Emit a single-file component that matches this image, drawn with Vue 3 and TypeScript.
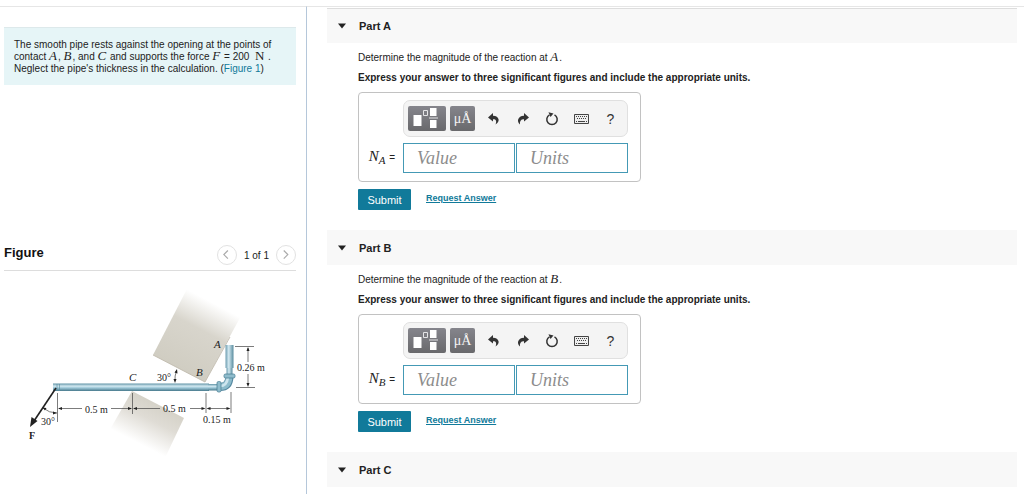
<script setup lang="ts">
import { reactive } from 'vue'

interface Part {
  id: string
  open: boolean
  value: string
  units: string
}

const parts = reactive<Part[]>([
  { id: 'A', open: true, value: '', units: '' },
  { id: 'B', open: true, value: '', units: '' },
  { id: 'C', open: false, value: '', units: '' },
])
</script>

<template>
  <div class="page">
    <aside class="side">
      <p class="problem">
        The smooth pipe rests against the opening at the points of contact <i class="math">A</i>,
        <i class="math">B</i>, and <i class="math">C</i> and supports the force
        <i class="math">F</i> = 200 &nbsp;<span class="math">N</span> . Neglect the pipe's thickness in the
        calculation. (<a href="#figure">Figure 1</a>)
      </p>
      <section id="figure" class="figure">
        <header class="figure-head">
          <h2>Figure</h2>
          <nav class="pager">
            <button type="button" aria-label="Previous figure">
              <svg viewBox="0 0 20 20"><path d="M11 5 6.500 9.500l4.500 4.500" /></svg>
            </button>
            <span>1 of 1</span>
            <button type="button" aria-label="Next figure">
              <svg viewBox="0 0 20 20"><path d="M7.500 5 12 9.500 7.500 14" /></svg>
            </button>
          </nav>
        </header>
        <svg class="diagram" viewBox="4 271 292 194" role="img" aria-label="Pipe resting at points A, B and C">
          <defs>
            <linearGradient id="upper" gradientUnits="userSpaceOnUse" x1="179" y1="368" x2="213" y2="303">
              <stop offset="0" stop-color="#d0cdc2" />
              <stop offset="0.600" stop-color="#d8d5cc" />
              <stop offset="1" stop-color="#ffffff" />
            </linearGradient>
            <linearGradient id="lower" gradientUnits="userSpaceOnUse" x1="158" y1="404" x2="138" y2="443">
              <stop offset="0" stop-color="#d5d2c8" />
              <stop offset="0.400" stop-color="#dfdcd5" />
              <stop offset="1" stop-color="#ffffff" />
            </linearGradient>
            <linearGradient id="pipe" x1="0" y1="0" x2="0" y2="1">
              <stop offset="0" stop-color="#5f93a6" />
              <stop offset="0.350" stop-color="#d3e9f1" />
              <stop offset="0.550" stop-color="#a5cddc" />
              <stop offset="1" stop-color="#47798c" />
            </linearGradient>
            <linearGradient id="riser" x1="0" y1="0" x2="1" y2="0">
              <stop offset="0" stop-color="#6b9caf" />
              <stop offset="0.400" stop-color="#d3e9f1" />
              <stop offset="1" stop-color="#588b9e" />
            </linearGradient>
          </defs>
          <path d="M153 355 205 382 241 316 188 287z" fill="url(#upper)" />
          <path d="M153 355 205 382 230 337" fill="none" stroke="#bdb6a8" stroke-width="0.800" />
          <path d="M132 391 184 418 164 460 108 433z" fill="url(#lower)" />
          <rect x="53" y="383.500" width="156" height="7.500" fill="url(#pipe)" />
          <path d="M57 384v7M59.500 384v7" stroke="#568a9e" stroke-width="0.600" />
          <rect x="208" y="384" width="10" height="6.500" fill="url(#pipe)" />
          <rect x="226.500" y="345" width="6" height="32" fill="url(#riser)" />
          <rect x="225.500" y="345" width="8" height="23" fill="url(#riser)" />
          <path d="M220 387q9 0 9.500-10" fill="none" stroke="#5588a0" stroke-width="8" />
          <path d="M220 386.700q8.500 0 9.200-10" fill="none" stroke="#8dbccc" stroke-width="6.500" />
          <path d="M220 386q7 0 8-9" fill="none" stroke="#cde5ee" stroke-width="2.500" />
          <rect x="217" y="381.500" width="4" height="10.500" rx="1.500" fill="#8fbccc" stroke="#4d8195" stroke-width="0.800" />
          <rect x="224" y="374" width="11" height="4" rx="1.500" fill="#8fbccc" stroke="#4d8195" stroke-width="0.800" />
          <g class="dims">
            <path d="M57.500 393v29M132.500 393v21M206 393v20M231 392v21M235 346.500h19M236 387.500h19M248 348v14M248 374v11" />
            <path d="M60 408.500h22M111 408.500h20M134 408.500h26M190 408.500h14M208 408.500h21" />
            <path d="M43 408q6 5 14 5M176.500 371q-2 5-1.500 10" />
          </g>
          <path
            class="tips"
            d="M58 408.500l4-1.500v3zM132 408.500l-4-1.500v3zM133 408.500l4-1.500v3zM205.500 408.500l-4-1.500v3zM206.500 408.500l4-1.500v3zM230.500 408.500l-4-1.500v3zM248 347l-1.500 4h3zM248 387l-1.500-4h3zM57 413l-4-1.500v3zM42.500 407.500l4 .5-1.500 2.500zM177 369l-2.500 3.500 3 1zM175 383l-1.500-4h3z"
          />
          <path d="M56 388 34 421" stroke="#222" stroke-width="1.600" />
          <path class="tips" d="M30 427l1.500-10 6 4z" />
          <g class="labels">
            <text x="129" y="381" class="it">C</text>
            <text x="214" y="348" class="it">A</text>
            <text x="196" y="376" class="it">B</text>
            <text x="157" y="381">30°</text>
            <text x="237" y="371">0.26 m</text>
            <text x="85" y="413">0.5 m</text>
            <text x="163" y="412">0.5 m</text>
            <text x="203" y="423">0.15 m</text>
            <text x="41" y="425">30°</text>
            <text x="29" y="439" class="bold">F</text>
          </g>
        </svg>
      </section>
    </aside>

    <main class="main">
      <section v-for="part in parts" :key="part.id" class="part">
        <h2 class="part-head">
          <button type="button" :aria-expanded="part.open" @click="part.open = !part.open">
            <svg viewBox="0 0 8 6"><path d="M0 .500h8L4 5.500z" /></svg>
            Part {{ part.id }}
          </button>
        </h2>
        <form v-if="part.open" class="part-body" @submit.prevent>
          <p>Determine the magnitude of the reaction at <i class="math">{{ part.id }}</i>.</p>
          <p class="strong">Express your answer to three significant figures and include the appropriate units.</p>
          <div class="answer">
            <div class="toolbar">
              <button type="button" class="dark wide" aria-label="Templates">
                <svg viewBox="0 0 38 25">
                  <path d="M5.500 9h8v11h-8zM22 2h6.500v8H22zM22 14h6.500v8H22z" fill="#fff" />
                  <path d="M21 12h9" stroke="#e4e4e6" stroke-width="1" />
                  <path d="M15.500 4.500h4v5h-4z" fill="none" stroke="#e4e4e6" />
                </svg>
              </button>
              <button type="button" class="dark unit" aria-label="Unit symbols">μÅ</button>
              <button type="button" class="tool" aria-label="Undo">
                <svg viewBox="0 0 14 14"><path d="M6 1 1 5.500l5 4V7.200c3-.2 4 1.800 2.500 5.300C13.500 9.500 12.500 4 6 3.700z" /></svg>
              </button>
              <button type="button" class="tool" aria-label="Redo">
                <svg viewBox="0 0 14 14"><path d="M8 1 13 5.500l-5 4V7.200C5 7 3.500 9 4 12.500.5 9.500 1.500 4 8 3.700z" /></svg>
              </button>
              <button type="button" class="tool" aria-label="Reset">
                <svg viewBox="0 0 14 14">
                  <path d="M9.500 2.800A5.200 5.200 0 1 1 4.500 2.800" fill="none" stroke="#333" stroke-width="1.500" />
                  <path d="M3.500.3 8.500 1.500 5.500 5z" />
                </svg>
              </button>
              <button type="button" class="tool" aria-label="Keyboard">
                <svg class="keys" viewBox="0 0 15 10">
                  <path d="M.500.500h14v9H.500z" fill="#eee" stroke="#444" />
                  <path d="M2 2.500h11M3 4.500h10" stroke="#444" stroke-dasharray="1 1" />
                  <path d="M2 7.500h1m1 0h7m1 0h1" stroke="#444" />
                </svg>
              </button>
              <button type="button" class="tool help" aria-label="Help">?</button>
            </div>
            <label class="name" :for="'value-' + part.id"><i>N<sub>{{ part.id }}</sub></i> =</label>
            <div class="fields">
              <input :id="'value-' + part.id" v-model="part.value" type="text" placeholder="Value" />
              <input v-model="part.units" type="text" placeholder="Units" aria-label="Units" />
            </div>
          </div>
          <div class="actions">
            <button type="submit" class="submit">Submit</button>
            <a href="#answer">Request Answer</a>
          </div>
        </form>
      </section>
    </main>
  </div>
</template>

<style>
body {
  background: #fff;
}
</style>

<style scoped>
.page {
  display: flex;
  box-sizing: border-box;
  min-height: 100vh;
  padding-top: 6px;
  color: #222;
  font: 10px/12px "Liberation Sans", Arial, sans-serif;
}
.page * {
  box-sizing: border-box;
}
button {
  padding: 0;
  border: 0;
  background: none;
  color: inherit;
  font: inherit;
  cursor: pointer;
}
svg {
  display: block;
}
h2,
p {
  margin: 0;
}
a {
  color: #117a9a;
}
.side {
  flex: 0 0 307px;
  padding: 20px 10px 0 4px;
  border-top: 1px solid #e6e6e6;
  border-right: 1px solid #b5c7da;
}
.problem {
  padding: 11px 20px 10px 10px;
  border-top: 1px solid #dde9eb;
  background: #e6f5f7;
}
.problem a {
  text-decoration: none;
}
.math {
  margin-right: 1px;
  font-family: "Liberation Serif", serif;
  font-size: 13px;
  line-height: 1px;
}
.figure {
  margin-top: 157px;
}
.figure-head {
  display: flex;
  align-items: flex-start;
  justify-content: space-between;
  height: 29px;
  padding-top: 3px;
  border-bottom: 1px solid #ddd;
}
.figure-head h2 {
  color: #111;
  font-size: 13px;
  line-height: 16px;
}
.pager {
  display: flex;
  align-items: center;
  gap: 7px;
}
.pager span {
  padding-top: 2px;
}
.pager button {
  width: 20px;
  height: 20px;
  border: 1px solid #e2e2e2;
  border-radius: 50%;
}
.pager path {
  fill: none;
  stroke: #aaa;
  stroke-width: 1.3;
}
.diagram {
  width: 100%;
}
.dims {
  fill: none;
  stroke: #444;
  stroke-width: 0.7;
}
.tips {
  fill: #222;
}
.labels {
  fill: #222;
  font: 10px "Liberation Serif", serif;
}
.it {
  font-style: italic;
  font-size: 11px;
}
.bold {
  font-weight: bold;
}
.main {
  flex: 1;
  min-width: 0;
  padding: 1px 7px 8px 20px;
  border-top: 1px solid #e6e6e6;
}
.part-head {
  font-size: 11px;
  background: #f8f8f8;
  border-top: 1px solid #f8f8f8;
}
.part:first-child .part-head {
  border-top-color: #ddd;
}
.part-head button {
  display: flex;
  align-items: center;
  gap: 13px;
  width: 100%;
  height: 34px;
  padding-left: 11px;
}
.part-head svg {
  width: 8px;
  height: 6px;
  fill: #222;
}
.part-body {
  padding: 9px 0 20px 31px;
}
.part-body p {
  margin-bottom: 8px;
}
.part-body .strong {
  font-weight: bold;
}
.answer {
  display: grid;
  grid-template-columns: 36px minmax(0, 1fr);
  gap: 6px 8px;
  align-items: center;
  width: 283px;
  max-width: 100%;
  padding: 7px 12px 8px 0;
  border: 1px solid #c2c2c2;
  border-radius: 4px;
}
.toolbar {
  grid-column: 2;
  display: flex;
  align-items: center;
  height: 37px;
  padding: 0 2px 0 4px;
  border: 1px solid #e0e0e0;
  border-radius: 7px;
  background: #f4f4f4;
}
.dark {
  height: 25px;
  margin-right: 4px;
  border-radius: 2px;
  background: linear-gradient(#85858c, #69696c);
  color: #f5f5f5;
}
.wide {
  width: 38px;
}
.unit {
  width: 25px;
  font: 14px/24px "Liberation Serif", serif;
}
.tool {
  display: flex;
  flex: 1;
  align-items: center;
  justify-content: center;
  height: 25px;
  color: #333;
}
.tool svg {
  width: 14px;
  height: 14px;
  fill: #333;
}
.tool .keys {
  width: 15px;
  height: 10px;
}
.help {
  font-size: 14px;
}
.name {
  padding-bottom: 3px;
  text-align: right;
  white-space: nowrap;
}
.name i {
  font: italic 15px/14px "Liberation Serif", serif;
}
.name sub {
  margin-right: 1px;
  font-size: 11px;
  line-height: 1px;
  vertical-align: -3px;
}
.fields {
  display: flex;
  gap: 1px;
}
.fields input {
  flex: 1;
  min-width: 0;
  height: 30px;
  padding: 0 13px;
  border: 1px solid #4499b5;
  border-radius: 0;
  background: #fff;
  color: #222;
  font: italic 18px "Liberation Serif", serif;
}
.fields input::placeholder {
  color: #8c8c8c;
  opacity: 1;
}
.actions {
  display: flex;
  align-items: center;
  gap: 15px;
  margin-top: 7px;
}
.submit {
  width: 53px;
  height: 21px;
  border-radius: 1px;
  background: #117a9a;
  color: #fff;
  font-size: 11px;
}
.actions a {
  padding-bottom: 3px;
  font-size: 9px;
  font-weight: bold;
}
</style>
